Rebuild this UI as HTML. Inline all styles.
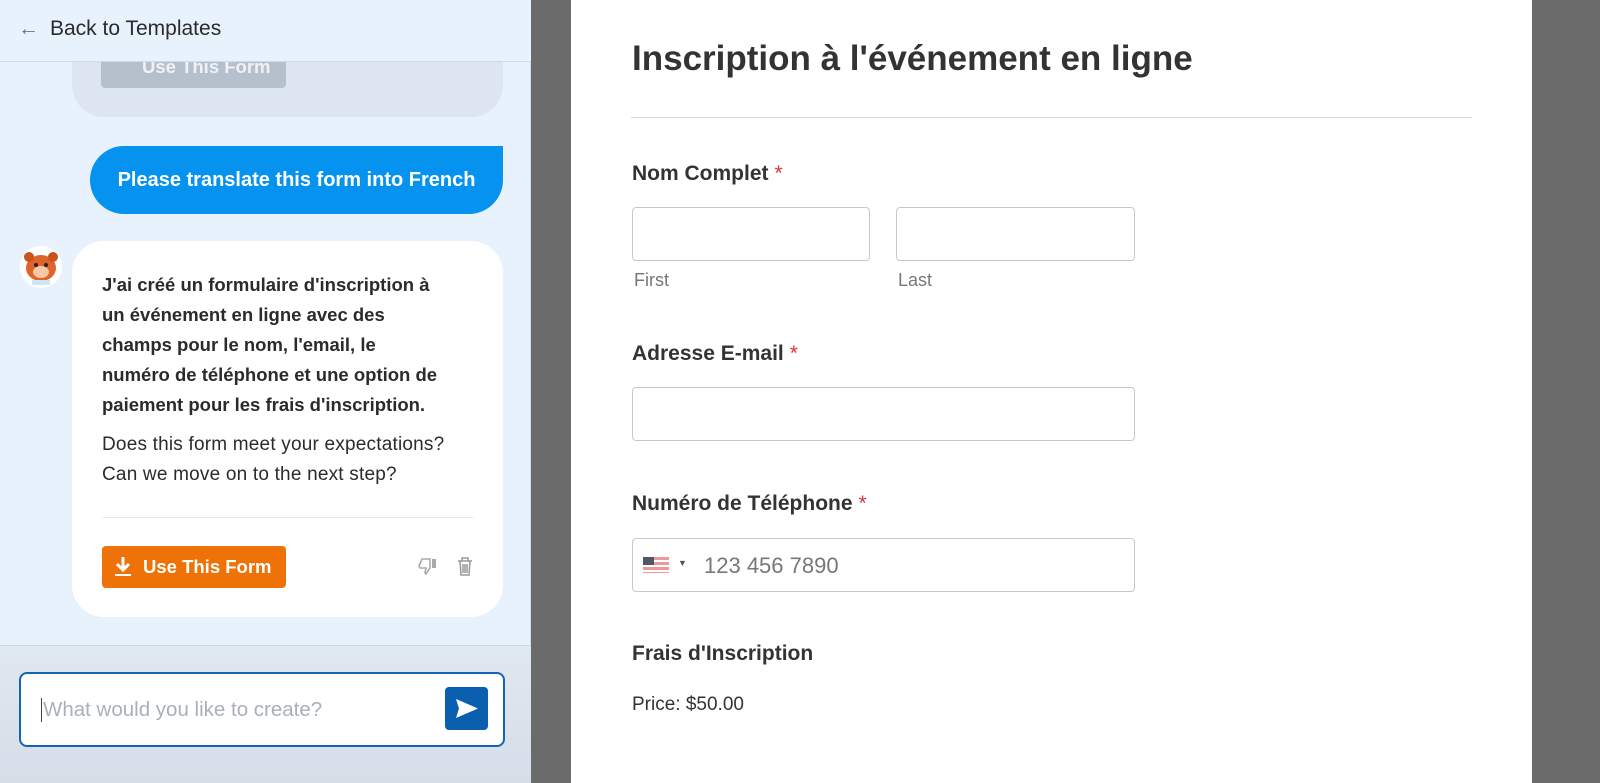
<!DOCTYPE html>
<html><head><meta charset="utf-8"><style>
*{box-sizing:border-box;margin:0;padding:0}
body{width:1600px;height:783px;overflow:hidden;background:#6b6b6b;font-family:"Liberation Sans",Arial,sans-serif;position:relative}
.left{position:absolute;left:0;top:0;width:531px;height:783px;background:#e8f2fc;border-right:1px solid #d4dbe3}
.hdr{position:absolute;left:0;top:0;width:531px;height:62px;border-bottom:1px solid #d0d8e2;background:#e8f2fc;z-index:2}
.hdr span{position:absolute;left:50px;top:17px;font-size:21px;color:#2b2b2b}
.hdr .ar{left:18px;top:17px;color:#6b7480}
.oldcard{position:absolute;left:72px;top:30px;width:431px;height:87px;background:#dde6f0;border-radius:0 0 32px 32px}
.btn{position:absolute;height:42px;border-radius:4px;color:#fff;font-weight:bold;font-size:18.5px;line-height:42px;padding-left:41px}
.user{position:absolute;left:90px;top:146px;width:413px;height:68px;background:#0693f0;border-radius:34px 0 34px 34px;color:#fff;font-weight:bold;font-size:20px;line-height:68px;text-align:center}
.card{position:absolute;left:72px;top:241px;width:431px;height:376px;background:#fff;border-radius:32px}
.card p{position:absolute;left:30px;white-space:nowrap;font-size:19px;letter-spacing:0.2px;line-height:30px;color:#2b2b2b}
.av{position:absolute;left:20px;top:246px;width:42px;height:42px;border-radius:50%;background:#fff}
.bottom{position:absolute;left:0;top:645px;width:531px;height:138px;background:linear-gradient(#e0e8f0,#d5dde8);border-top:1px solid #cfd8e3}
.inp{position:absolute;left:19px;top:672px;width:486px;height:75px;background:#fff;border:2px solid #1464b4;border-radius:8px}
.inp span{position:absolute;left:20px;top:24px;font-size:20.5px;color:#a9b0b8;border-left:1px solid #444;padding-left:1px}
.send{position:absolute;left:445px;top:687px;width:43px;height:43px;background:#0a5fae;border-radius:4px}
.form{position:absolute;left:571px;top:0;width:961px;height:783px;background:#fff}
.form h1{position:absolute;left:61px;top:39px;font-size:35px;font-weight:bold;color:#333}
.hr{position:absolute;left:60px;top:117px;width:841px;height:1px;background:#d8d8d8}
.lbl{position:absolute;left:61px;font-size:21px;font-weight:bold;color:#333}
.lbl b{color:#d63638;font-weight:normal;margin-left:6px}
.box{position:absolute;border:1px solid #c8c8c8;border-radius:4px;height:54px}
.sub{position:absolute;font-size:18px;color:#777}
</style></head><body>
<div class="left">
 <div class="oldcard">
  <div class="btn" style="left:29px;top:16px;width:185px;background:#b6c0cc;color:#eef2f6">Use This Form</div>
 </div>
 <div class="hdr"><span class="ar">←</span><span>Back to Templates</span></div>
 <div class="user">Please translate this form into French</div>
 <div class="av"><svg width="42" height="42"><circle cx="21" cy="21" r="21" fill="#fff"/><ellipse cx="21" cy="22" rx="15" ry="13" fill="#e0642a"/><circle cx="9" cy="11" r="5" fill="#c9521f"/><circle cx="33" cy="11" r="5" fill="#c9521f"/><ellipse cx="21" cy="26" rx="8" ry="6" fill="#f4c9a4"/><circle cx="16" cy="19" r="2" fill="#222"/><circle cx="26" cy="19" r="2" fill="#222"/><rect x="12" y="34" width="18" height="5" fill="#cfe4f5"/></svg></div>
 <div class="card">
  <p style="top:29px;font-weight:bold;font-size:18.5px;letter-spacing:0">J'ai créé un formulaire d'inscription à<br>un événement en ligne avec des<br>champs pour le nom, l'email, le<br>numéro de téléphone et une option de<br>paiement pour les frais d'inscription.</p>
  <p style="top:189px">Does this form meet your expectations?<br>Can we move on to the next step?</p>
  <div style="position:absolute;left:30px;top:276px;width:372px;height:1px;background:#e8e8e8"></div>
  <div class="btn" style="left:30px;top:305px;width:184px;background:#ee7207">Use This Form</div>
  <svg style="position:absolute;left:42px;top:315px" width="18" height="22"><path d="M9 1v12M3 8l6 6 6-6" stroke="#fff" stroke-width="3" fill="none"/><rect x="1" y="18" width="16" height="2" fill="#fff"/></svg>
  <svg style="position:absolute;left:345px;top:316px" width="22" height="20"><path d="M2 9l3-7h8v9l-4 6-1-1 1-5H3z" stroke="#aaa" stroke-width="1.6" fill="none"/><rect x="15" y="2" width="4" height="9" fill="#aaa"/></svg>
  <svg style="position:absolute;left:384px;top:315px" width="18" height="21"><path d="M2 5h14M6 5V2h6v3M4 5l1 14h8l1-14M7 8v9M9 8v9M11 8v9" stroke="#999" stroke-width="1.5" fill="none"/></svg>
 </div>
 <div class="bottom"></div>
 <div class="inp"><span>What would you like to create?</span></div>
 <div class="send"><svg width="43" height="43"><path d="M11 12l22 9.5L11 31l3-9.5z" fill="#fff"/></svg></div>
</div>
<div class="form">
 <h1>Inscription à l'événement en ligne</h1>
 <div class="hr"></div>
 <div class="lbl" style="top:162px">Nom Complet<b>*</b></div>
 <div class="box" style="left:61px;top:207px;width:238px"></div>
 <div class="box" style="left:325px;top:207px;width:239px"></div>
 <div class="sub" style="left:63px;top:270px">First</div>
 <div class="sub" style="left:327px;top:270px">Last</div>
 <div class="lbl" style="top:342px">Adresse E-mail<b>*</b></div>
 <div class="box" style="left:61px;top:387px;width:503px"></div>
 <div class="lbl" style="top:492px">Numéro de Téléphone<b>*</b></div>
 <div class="box" style="left:61px;top:538px;width:503px">
  <svg style="position:absolute;left:10px;top:18px" width="26" height="16"><rect width="26" height="16" fill="#e99"/><rect y="3" width="26" height="2" fill="#fff"/><rect y="8" width="26" height="2" fill="#fff"/><rect y="13" width="26" height="2" fill="#fff"/><rect width="11" height="8" fill="#556"/></svg>
  <span style="position:absolute;left:45px;top:19px;font-size:9px;color:#555">▼</span>
  <span style="position:absolute;left:71px;top:14px;font-size:22px;color:#777">123 456 7890</span>
 </div>
 <div class="lbl" style="top:642px">Frais d'Inscription</div>
 <div style="position:absolute;left:61px;top:694px;font-size:19px;color:#333">Price: $50.00</div>
</div>
</body></html>
